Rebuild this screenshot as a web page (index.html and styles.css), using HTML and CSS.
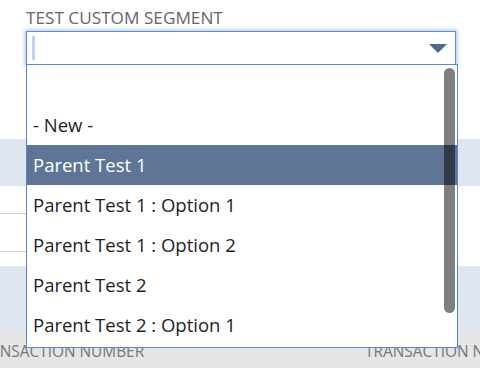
FILE: index.html
```html
<!DOCTYPE html>
<html>
  <head>
    <title>Custom Segment</title>
    <link rel="stylesheet" href="styles.css">
  </head>
  <body>
    <div class="page">
      <div class="field">
        <label class="field-label">TEST CUSTOM SEGMENT</label>
        <div class="select-box">
          <span class="caret"></span>
          <span class="arrow"></span>
          <div class="dropdown">
            <ul class="options">
              <li class="option"></li>
              <li class="option">- New -</li>
              <li class="option selected">Parent Test 1</li>
              <li class="option">Parent Test 1 : Option 1</li>
              <li class="option">Parent Test 1 : Option 2</li>
              <li class="option">Parent Test 2</li>
              <li class="option">Parent Test 2 : Option 1</li>
            </ul>
            <div class="scroll-thumb"></div>
          </div>
        </div>
      </div>

      <div class="sublist">
        <div class="band top-band"></div>
        <div class="line-row"><div class="cell"></div></div>
        <div class="line-row tall"><div class="cell"></div></div>
        <div class="spacer"></div>
        <div class="band low-band"></div>
        <div class="head-row">
          <span class="head-cell first">TRANSACTION NUMBER</span>
          <span class="head-cell">TRANSACTION NUMBER</span>
        </div>
      </div>
    </div>
  </body>
</html>
```

FILE: styles.css
```css
body {
  margin: 0;
  background: #fff;
  font-family: "Open Sans", "Liberation Sans", sans-serif;
}
.page {
  width: 480px;
  height: 368px;
  overflow: hidden;
}
.field {
  padding: 8px 24px 0 26px;
}
.field-label {
  display: block;
  font-size: 17.2px;
  line-height: 20px;
  color: #666;
  margin-bottom: 3px;
}
.select-box {
  position: relative;
  z-index: 2;
  display: flex;
  align-items: center;
  height: 32px;
  width: 423px;
  padding-left: 5px;
  box-sizing: content-box;
  border: 1px solid #5b8ed3;
  box-shadow: 0 0 4px 1px rgba(91, 142, 211, .55);
  background: #fff;
}
.caret {
  width: 3px;
  height: 24px;
  background: #b7d4f0;
}
.arrow {
  margin-left: auto;
  margin-right: 8px;
  width: 0;
  height: 0;
  border-left: 9px solid transparent;
  border-right: 9px solid transparent;
  border-top: 9px solid #4d6a91;
}
.dropdown {
  position: absolute;
  top: 100%;
  left: -1px;
  width: 432px;
  box-sizing: border-box;
  border: 1px solid #4f8bd2;
  background: #fff;
  padding-bottom: 2px;
}
.options {
  list-style: none;
  margin: 0;
  padding: 0;
}
.option {
  height: 40px;
  line-height: 40px;
  padding-left: 6px;
  font-size: 18.5px;
  color: #1e1e1e;
  white-space: nowrap;
}
.option.selected {
  background: #5f7596;
  color: #fff;
}
.scroll-thumb {
  position: absolute;
  top: 3px;
  right: 2px;
  width: 11px;
  height: 245px;
  border-radius: 6px;
  background: rgba(0, 0, 0, .5);
}
.sublist {
  margin-top: 74px;
}
.band {
  background: #e0e6ef;
}
.top-band {
  height: 47px;
}
.line-row {
  height: 28px;
}
.line-row.tall {
  height: 38px;
}
.line-row .cell {
  width: 60px;
  height: 100%;
  box-sizing: border-box;
  border-bottom: 1px solid #cfcfcf;
}
.spacer {
  height: 14px;
}
.low-band {
  height: 64px;
}
.head-row {
  display: flex;
  height: 38px;
  padding-top: 3px;
  box-sizing: border-box;
  background: #e6e6e6;
  color: #777;
  font-size: 15.4px;
  line-height: 38px;
  white-space: nowrap;
}
.head-cell.first {
  margin-left: -28px;
  width: 393px;
  flex-shrink: 0;
}
```
